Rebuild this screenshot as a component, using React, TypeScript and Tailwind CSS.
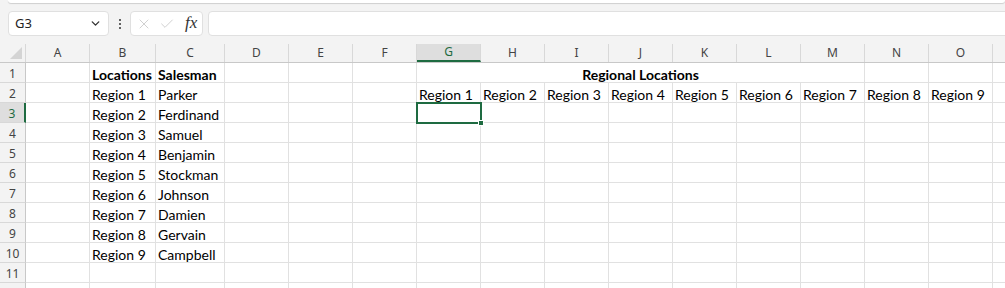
import React from 'react';
import { ChevronDown, X, Check } from 'lucide-react';

const colLetters = ['A', 'B', 'C', 'D', 'E', 'F', 'G', 'H', 'I', 'J', 'K', 'L', 'M', 'N', 'O', 'P'];
const colWidths = [64, 66, 69, 64, 64, 64, 64, 64, 64, 64, 64, 64, 64, 64, 64, 64];
const salesmen = ['Parker', 'Ferdinand', 'Samuel', 'Benjamin', 'Stockman', 'Johnson', 'Damien', 'Gervain', 'Campbell'];

type Cell = { text?: string; bold?: boolean };

const buildRow = (r: number): Cell[] => {
  const cells: Cell[] = colLetters.map(() => ({}));
  if (r === 1) {
    cells[1] = { text: 'Locations', bold: true };
    cells[2] = { text: 'Salesman', bold: true };
  } else if (r >= 2 && r <= 10) {
    cells[1] = { text: `Region ${r - 1}` };
    cells[2] = { text: salesmen[r - 2] };
  }
  if (r === 2) {
    for (let i = 0; i < 9; i++) cells[6 + i] = { text: `Region ${i + 1}` };
  }
  return cells;
};

const CellBox: React.FC<{ width: number; cell: Cell }> = ({ width, cell }) => (
  <div
    className="shrink-0 h-full border-r border-b border-[#e1e1e1] flex items-end pl-[2px] overflow-visible whitespace-nowrap"
    style={{ width }}
  >
    {cell.text && (
      <span className={`text-[14px] leading-[14px] text-black ${cell.bold ? 'font-bold' : ''}`}>{cell.text}</span>
    )}
  </div>
);

const App: React.FC = () => {
  const rows = Array.from({ length: 12 }, (_, i) => i + 1);

  return (
    <div className="w-[1005px] h-[288px] overflow-hidden bg-[#f3f3f3] font-['Lato','Liberation_Sans',sans-serif] select-none">
      {/* ribbon edge */}
      <div className="ml-[8px] h-[3px] bg-white rounded-b-[6px] shadow-[0_1px_1px_rgba(0,0,0,0.15)]" />

      {/* formula bar */}
      <div className="flex items-center h-[25px] mt-[8px] ml-[8px]">
        <div className="w-[101px] h-full bg-white border border-[#e0e0e0] rounded-[4px] flex items-center justify-between pl-[6px] pr-[6px]">
          <span className="text-[13px] text-[#222] font-['Noto_Sans',sans-serif]">G3</span>
          <ChevronDown size={13} strokeWidth={2.5} className="text-[#333]" />
        </div>
        <div className="w-[21px] flex flex-col items-center gap-[2px]">
          <span className="w-[2px] h-[2px] bg-[#333] rounded-full" />
          <span className="w-[2px] h-[2px] bg-[#333] rounded-full" />
          <span className="w-[2px] h-[2px] bg-[#333] rounded-full" />
        </div>
        <div className="w-[73px] h-full bg-white border border-[#e0e0e0] rounded-[4px] flex items-center pl-[5px] gap-[7px]">
          <X size={16} strokeWidth={1} className="text-[#b8b8b8]" />
          <Check size={16} strokeWidth={1} className="text-[#b8b8b8]" />
          <span className="font-['Liberation_Serif',serif] italic text-[17px] leading-none text-[#333] ml-[3px] -mt-[2px]">fx</span>
        </div>
        <div className="ml-[5px] h-full flex-1 -mr-[10px] bg-white border border-[#e0e0e0] rounded-[4px]" />
      </div>

      {/* sheet */}
      <div className="mt-[8px] bg-white">
        {/* column header */}
        <div className="flex h-[19px] bg-[#f3f3f3] border-b border-[#c8c8c8] font-['Noto_Sans',sans-serif]">
          <div className="w-[26px] shrink-0 h-full border-r border-[#d8d8d8] relative">
            <div className="absolute right-[3px] bottom-[3px] w-0 h-0 border-l-[12px] border-l-transparent border-b-[12px] border-b-[#d4d4d4]" />
          </div>
          {colLetters.map((c, i) => (
            <div
              key={c}
              className={`shrink-0 h-full flex items-center justify-center text-[12px] border-r border-[#d8d8d8] ${
                c === 'G' ? 'bg-[#dedede] text-[#1e6b41] border-b-2 border-b-[#1e6b41]' : 'text-[#444]'
              }`}
              style={{ width: colWidths[i] }}
            >
              {c === 'P' ? '' : c}
            </div>
          ))}
        </div>

        {rows.map(r => {
          const cells = buildRow(r);
          return (
            <div key={r} className="flex h-[20px]">
              <div
                className={`w-[26px] shrink-0 h-full flex items-center justify-center pt-[3px] text-[12px] font-['Noto_Sans',sans-serif] border-b border-[#d8d8d8] ${
                  r === 3
                    ? 'bg-[#dedede] text-[#1e6b41] border-r-2 border-r-[#1e6b41]'
                    : 'bg-[#f3f3f3] text-[#444] border-r border-r-[#c8c8c8]'
                }`}
              >
                {r < 12 ? r : ''}
              </div>
              {r === 1 ? (
                <>
                  {cells.slice(0, 6).map((cell, i) => (
                    <CellBox key={i} width={colWidths[i]} cell={cell} />
                  ))}
                  <div
                    className="shrink-0 h-full border-r border-b border-[#e1e1e1] flex items-end justify-center"
                    style={{ width: 64 * 7 }}
                  >
                    <span className="text-[14px] leading-[14px] font-bold text-black">Regional Locations</span>
                  </div>
                  {cells.slice(13).map((cell, i) => (
                    <CellBox key={i + 13} width={colWidths[i + 13]} cell={cell} />
                  ))}
                </>
              ) : (
                cells.map((cell, i) => (
                  <div key={i} className="relative shrink-0 h-full" style={{ width: colWidths[i] }}>
                    <CellBox width={colWidths[i]} cell={cell} />
                    {r === 3 && i === 6 && (
                      <div className="absolute z-10 -left-[1px] -top-[1px] w-[66px] h-[22px] border-2 border-[#1e6b41]">
                        <div className="absolute -right-[4px] -bottom-[4px] w-[6px] h-[6px] bg-[#1e6b41] border border-white" />
                      </div>
                    )}
                  </div>
                ))
              )}
            </div>
          );
        })}
      </div>
    </div>
  );
};

export default App;
